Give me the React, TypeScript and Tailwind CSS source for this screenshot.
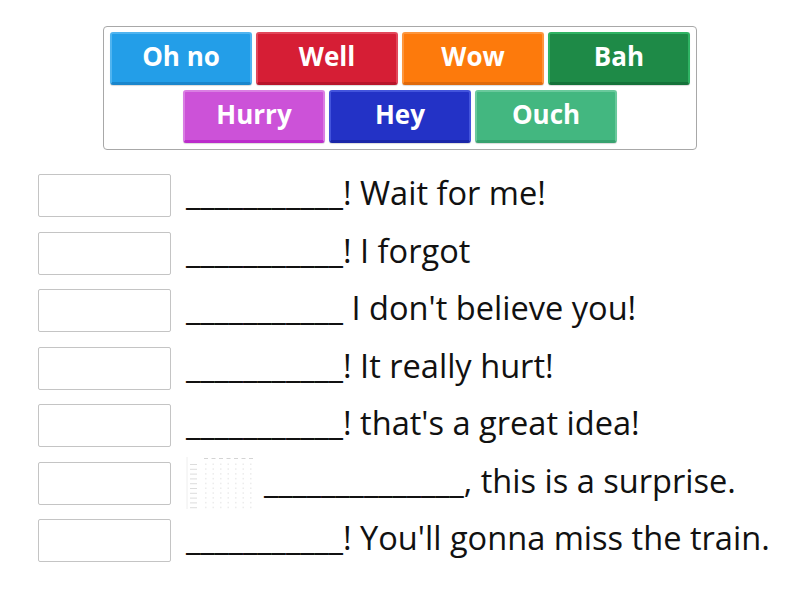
const tiles = [
  [
    { label: "Oh no", bg: "bg-[#239ee8]", edge: "border-[#4fb4f0]", bottom: "border-b-[#1a86cc]" },
    { label: "Well", bg: "bg-[#d61e35]", edge: "border-[#e2475a]", bottom: "border-b-[#b8142a]" },
    { label: "Wow", bg: "bg-[#fd7a0c]", edge: "border-[#fd963d]", bottom: "border-b-[#e0690a]" },
    { label: "Bah", bg: "bg-[#1e8a47]", edge: "border-[#2fb363]", bottom: "border-b-[#15723a]" },
  ],
  [
    { label: "Hurry", bg: "bg-[#cc52d8]", edge: "border-[#da7ee3]", bottom: "border-b-[#bb2ccb]" },
    { label: "Hey", bg: "bg-[#2332c6]", edge: "border-[#4354dc]", bottom: "border-b-[#1a26a8]" },
    { label: "Ouch", bg: "bg-[#43b780]", edge: "border-[#6ac99c]", bottom: "border-b-[#37a26f]" },
  ],
];

const sentences: { pre?: boolean; blank: string; rest: string }[] = [
  { blank: "___________", rest: "! Wait for me!" },
  { blank: "___________", rest: "! I forgot" },
  { blank: "___________", rest: " I don't believe you!" },
  { blank: "___________", rest: "! It really hurt!" },
  { blank: "___________", rest: "! that's a great idea!" },
  { pre: true, blank: "______________", rest: ", this is a surprise." },
  { blank: "___________", rest: "! You'll gonna miss the train." },
];

const Thumb = () => (
  <svg width="70" height="56" viewBox="0 0 70 56" className="shrink-0">
    {Array.from({ length: 7 }).map((_, c) => (
      <rect key={"h" + c} x={18 + c * 7.5} y={3} width={4} height={1} fill="#d4d4d4" />
    ))}
    {Array.from({ length: 10 }).map((_, r) => (
      <g key={r}>
        <rect x={4} y={9 + r * 4.8} width={7} height={1} fill="#dcdcdc" />
        {Array.from({ length: 7 }).map((_, c) => (
          <rect key={c} x={19 + c * 7.5} y={8.5 + r * 4.8} width={1.5} height={1.5} fill="#ececec" />
        ))}
      </g>
    ))}
    <line x1="1" y1="2" x2="1" y2="54" stroke="#eeeeee" strokeWidth="1" />
  </svg>
);

export default function App() {
  return (
    <div className="w-[800px] h-[600px] bg-white font-['Open_Sans',sans-serif] text-[#111]">
      <div className="pt-[26px] flex justify-center">
        <div className="w-[594px] border border-[#a8a8a8] rounded-[4px] px-[6px] pt-[5px] pb-[6px] flex flex-col gap-[5px]">
          {tiles.map((row, i) => (
            <div key={i} className="flex justify-center gap-[4px]">
              {row.map((t) => (
                <div
                  key={t.label}
                  className={`w-[142px] h-[53px] rounded-[3px] border-2 border-b-[3px] ${t.bg} ${t.edge} ${t.bottom} flex items-center justify-center pb-[5px] text-white font-bold text-[26px] leading-none shadow-[0_1px_1px_rgba(0,0,0,0.15)]`}
                >
                  {t.label}
                </div>
              ))}
            </div>
          ))}
        </div>
      </div>
      <div className="mt-[24px] flex flex-col gap-[14.5px] pl-[38px]">
        {sentences.map((s, i) => (
          <div key={i} className="flex items-center h-[43px]">
            <div className="w-[133px] h-[43px] border border-[#c4c4c4] rounded-[2px] shrink-0" />
            <div className="ml-[15px] flex items-center text-[32.6px] leading-none whitespace-pre pb-[4px]">
              {s.pre && (
                <div className="mr-[8px] pt-[4px]">
                  <Thumb />
                </div>
              )}
              <span>{s.blank}</span>
              <span>{s.rest}</span>
            </div>
          </div>
        ))}
      </div>
    </div>
  );
}
